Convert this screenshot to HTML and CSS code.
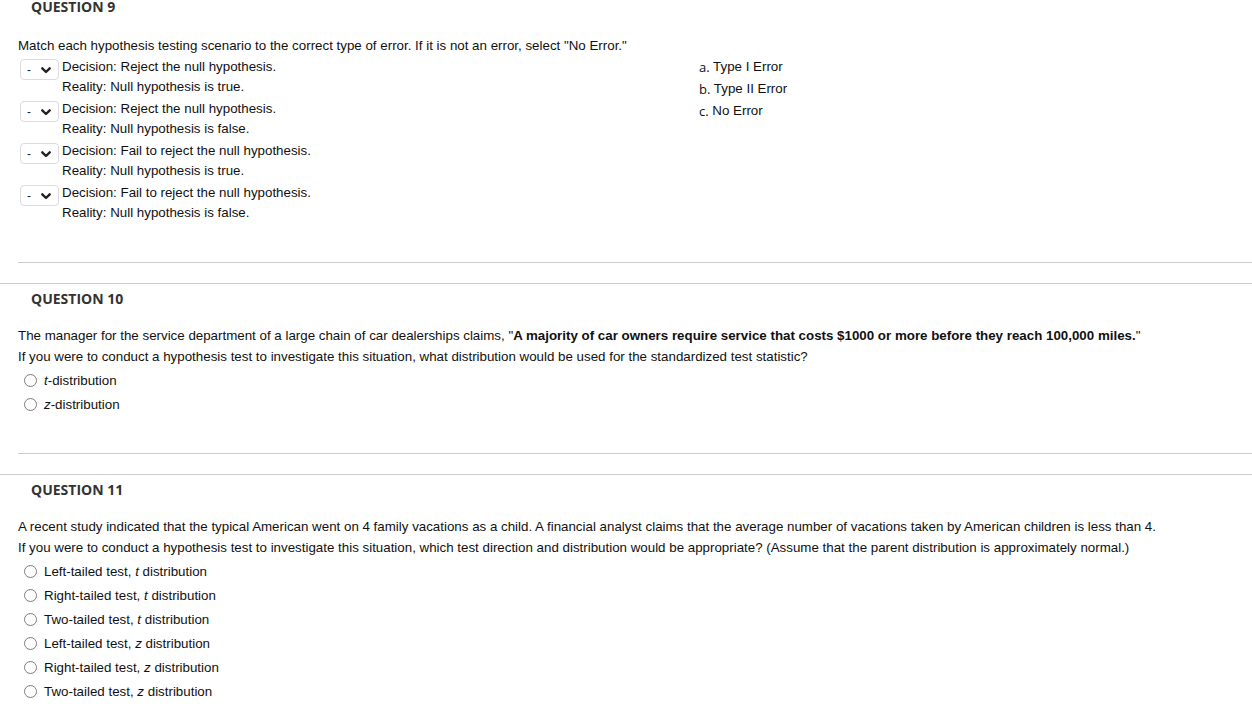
FILE: index.html
```html
<!DOCTYPE html>
<html>
<head>
<meta charset="utf-8">
<link rel="stylesheet" href="styles.css">
</head>
<body>
<div class="page">
  <section class="question">
    <div class="q-head">QUESTION 9</div>
    <div class="q-body q-first">
      <p class="line">Match each hypothesis testing scenario to the correct type of error. If it is not an error, select "No Error."</p>
      <div class="match">
        <div class="match-left">
          <div class="match-item">
            <div class="sel"><span class="dash">-</span><svg class="chev" width="10" height="7" viewBox="0 0 10 7"><path d="M1.3 1.3 L5 5 L8.7 1.3" fill="none" stroke="#222" stroke-width="2.4" stroke-linecap="round" stroke-linejoin="round"/></svg></div>
            <div class="match-text"><div>Decision: Reject the null hypothesis.</div><div>Reality: Null hypothesis is true.</div></div>
          </div>
          <div class="match-item">
            <div class="sel"><span class="dash">-</span><svg class="chev" width="10" height="7" viewBox="0 0 10 7"><path d="M1.3 1.3 L5 5 L8.7 1.3" fill="none" stroke="#222" stroke-width="2.4" stroke-linecap="round" stroke-linejoin="round"/></svg></div>
            <div class="match-text"><div>Decision: Reject the null hypothesis.</div><div>Reality: Null hypothesis is false.</div></div>
          </div>
          <div class="match-item">
            <div class="sel"><span class="dash">-</span><svg class="chev" width="10" height="7" viewBox="0 0 10 7"><path d="M1.3 1.3 L5 5 L8.7 1.3" fill="none" stroke="#222" stroke-width="2.4" stroke-linecap="round" stroke-linejoin="round"/></svg></div>
            <div class="match-text"><div>Decision: Fail to reject the null hypothesis.</div><div>Reality: Null hypothesis is true.</div></div>
          </div>
          <div class="match-item">
            <div class="sel"><span class="dash">-</span><svg class="chev" width="10" height="7" viewBox="0 0 10 7"><path d="M1.3 1.3 L5 5 L8.7 1.3" fill="none" stroke="#222" stroke-width="2.4" stroke-linecap="round" stroke-linejoin="round"/></svg></div>
            <div class="match-text"><div>Decision: Fail to reject the null hypothesis.</div><div>Reality: Null hypothesis is false.</div></div>
          </div>
        </div>
        <ul class="answers">
          <li><span class="letter">a.</span> Type I Error</li>
          <li><span class="letter">b.</span> Type II Error</li>
          <li><span class="letter">c.</span> No Error</li>
        </ul>
      </div>
    </div>
  </section>

  <section class="question">
    <div class="q-head">QUESTION 10</div>
    <div class="q-body">
      <p class="line">The manager for the service department of a large chain of car dealerships claims, "<b>A majority of car owners require service that costs $1000 or more before they reach 100,000 miles.</b>"</p>
      <p class="line">If you were to conduct a hypothesis test to investigate this situation, what distribution would be used for the standardized test statistic?</p>
      <div class="options">
        <label class="opt"><span class="radio"></span><span><i>t</i>-distribution</span></label>
        <label class="opt"><span class="radio"></span><span><i>z</i>-distribution</span></label>
      </div>
    </div>
  </section>

  <section class="question">
    <div class="q-head">QUESTION 11</div>
    <div class="q-body">
      <p class="line">A recent study indicated that the typical American went on 4 family vacations as a child. A financial analyst claims that the average number of vacations taken by American children is less than 4.</p>
      <p class="line">If you were to conduct a hypothesis test to investigate this situation, which test direction and distribution would be appropriate? (Assume that the parent distribution is approximately normal.)</p>
      <div class="options">
        <label class="opt"><span class="radio"></span><span>Left-tailed test, <i>t</i> distribution</span></label>
        <label class="opt"><span class="radio"></span><span>Right-tailed test, <i>t</i> distribution</span></label>
        <label class="opt"><span class="radio"></span><span>Two-tailed test, <i>t</i> distribution</span></label>
        <label class="opt"><span class="radio"></span><span>Left-tailed test, <i>z</i> distribution</span></label>
        <label class="opt"><span class="radio"></span><span>Right-tailed test, <i>z</i> distribution</span></label>
        <label class="opt"><span class="radio"></span><span>Two-tailed test, <i>z</i> distribution</span></label>
      </div>
    </div>
  </section>
</div>
</body>
</html>
```

FILE: styles.css
```css
html, body {
  margin: 0;
  padding: 0;
  background: #fff;
}
body {
  font-family: "Liberation Sans", Arial, sans-serif;
  font-size: 13.33px;
  color: #111;
  overflow: hidden;
}
.page {
  margin-top: -9px;
}
.question {
  border-top: 1px solid #cdcdcd;
}
.q-head {
  font-family: "Open Sans", sans-serif;
  font-weight: 700;
  font-size: 14px;
  line-height: 30px;
  color: #333;
  padding-left: 31px;
}
.q-body {
  margin-left: 18px;
  padding: 11px 0 37px;
  border-bottom: 1px solid #cdcdcd;
  margin-bottom: 20px;
}
.q-first {
  padding-top: 13px;
  padding-bottom: 39px;
}
.line {
  margin: 0;
  line-height: 21px;
}
.match {
  display: flex;
  padding-top: 1px;
}
.match-left {
  width: 681px;
  display: flex;
  flex-direction: column;
  gap: 2px;
}
.match-item {
  display: flex;
  line-height: 20px;
}
.sel {
  box-sizing: border-box;
  width: 39px;
  height: 21px;
  margin: 2px 3px 0 2px;
  border: 1px solid #dcdcdc;
  border-radius: 4px;
  display: flex;
  align-items: center;
  padding-left: 6px;
}
.dash {
  font-size: 12px;
  line-height: 1;
  color: #222;
  width: 14px;
}
.chev {
  display: block;
  margin-top: 1px;
}
.answers {
  list-style: none;
  margin: -1px 0 0;
  padding: 0;
}
.answers li {
  line-height: 22px;
}
.letter {
  font-family: "Open Sans", sans-serif;
  font-size: 13px;
  line-height: 0;
  position: relative;
  top: 1px;
}
.options {
  margin-top: 1px;
}
.opt {
  display: flex;
  align-items: center;
  height: 24px;
}
.radio {
  box-sizing: border-box;
  width: 13px;
  height: 13px;
  border: 1px solid #7d7d7d;
  border-radius: 50%;
  margin-left: 6px;
  margin-right: 7px;
  flex: none;
}
```
